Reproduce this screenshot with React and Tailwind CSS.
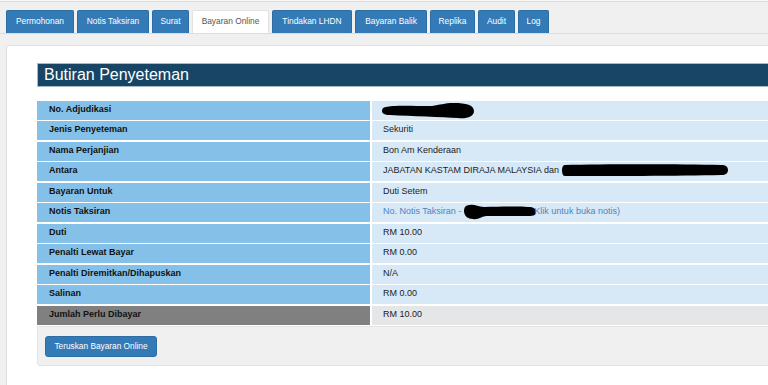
import React from "react";

const tabs = [
  ["Permohonan", "w-[68px]"],
  ["Notis Taksiran", "w-[72px]"],
  ["Surat", "w-[37px]"],
  ["Bayaran Online", "w-[77px]"],
  ["Tindakan LHDN", "w-[80px]"],
  ["Bayaran Balik", "w-[72px]"],
  ["Replika", "w-[45px]"],
  ["Audit", "w-[37px]"],
  ["Log", "w-[31px]"],
];

const rows = [
  { label: "No. Adjudikasi", value: "blob1" },
  { label: "Jenis Penyeteman", value: "Sekuriti" },
  { label: "Nama Perjanjian", value: "Bon Am Kenderaan" },
  { label: "Antara", value: "antara" },
  { label: "Bayaran Untuk", value: "Duti Setem" },
  { label: "Notis Taksiran", value: "notis" },
  { label: "Duti", value: "RM 10.00" },
  { label: "Penalti Lewat Bayar", value: "RM 0.00" },
  { label: "Penalti Diremitkan/Dihapuskan", value: "N/A" },
  { label: "Salinan", value: "RM 0.00" },
  { label: "Jumlah Perlu Dibayar", value: "RM 10.00", total: true },
];

function Value({ v }) {
  if (v === "blob1") {
    return (
      <div className="relative h-full">
        <svg width="94" height="17" viewBox="0 0 94 17" className="absolute left-[-1px] top-[-1px]">
          <path d="M4 4 C10 2 30 3 50 3 C58 2 62 0 72 0 C84 0 92 2 92 8 C92 14 84 16 76 15 C60 14 30 13 8 12 C2 12 0 10 0 8 C0 5 2 4 4 4 Z" fill="#000" />
        </svg>
      </div>
    );
  }
  if (v === "antara") {
    return (
      <div className="flex items-start">
        <span>JABATAN KASTAM DIRAJA MALAYSIA dan </span>
        <svg width="166" height="13" viewBox="0 0 166 13" className="ml-[3px] mt-[-1px]">
          <path d="M3 1 C40 0 120 0 159 1 C164 1 166 3 166 6 C166 9 164 11 159 11 C120 12 40 12 3 12 C1 12 0 10 0 6 C0 3 1 1 3 1 Z" fill="#000" />
        </svg>
      </div>
    );
  }
  if (v === "notis") {
    return (
      <div className="flex items-start text-[#4d84bd]">
        <span>No. Notis Taksiran - </span>
        <svg width="72" height="16" viewBox="0 0 72 16" className="mt-[-2px] ml-[3px]">
          <path d="M6 1 C10 0 14 3 20 3 C36 3 52 2 64 3 C70 3 72 5 72 8 C72 11 70 12 64 12 C50 12 36 12 22 12 C16 13 14 16 9 15 C4 15 0 12 0 7 C0 3 2 1 6 1 Z" fill="#000" />
        </svg>
        <span className="ml-[-2px]">Klik untuk buka notis)</span>
      </div>
    );
  }
  return <span>{v}</span>;
}

export default function App() {
  return (
    <div className="w-full h-[385px] overflow-hidden bg-[#f0f0f0] font-['Liberation_Sans',Arial,sans-serif]">
      <div className="h-[2px] bg-[#f7f7f7] border-b border-[#dcdcdc]" />
      <div className="flex gap-[3px] pl-[6px] pt-[7.5px] border-b border-[#dcdcdc]">
        {tabs.map(([t, w]) => {
          const active = t === "Bayaran Online";
          return (
            <div
              key={t}
              className={
                (active
                  ? "bg-white text-[#555] border border-b-0 border-[#e2e2e2] "
                  : "bg-[#337ab7] text-white border border-b-0 border-[#2e6da4] ") +
                "h-[23px] flex items-center justify-center text-[8.4px] rounded-t-[2px] whitespace-nowrap " +
                w
              }
            >
              {t}
            </div>
          );
        })}
      </div>
      <div className="ml-[6px] mt-[11px] w-[900px] h-[400px] bg-white border border-[#e0e0e0] rounded-[3px] pl-[30px] pt-[17px]">
        <div className="h-[24px] bg-[#184565] border border-[#a9b9c6] flex items-center pl-[6px] text-white text-[16px] leading-none">
          Butiran Penyeteman
        </div>
        <div className="mt-[14px] flex flex-col gap-[1.5px]">
          {rows.map((r) => (
            <div key={r.label} className="flex gap-[2px] h-[19px]">
              <div
                className={
                  (r.total ? "bg-[#808080] " : "bg-[#85c0e8] ") +
                  "w-[333px] pl-[12px] pt-[3px] text-[9px] font-bold text-[#111] leading-[11px]"
                }
              >
                {r.label}
              </div>
              <div
                className={
                  (r.total ? "bg-[#e4e6e7] " : "bg-[#d7e9f7] ") +
                  "flex-1 pl-[11px] pt-[3px] text-[9px] text-[#222] leading-[11px]"
                }
              >
                <Value v={r.value} />
              </div>
            </div>
          ))}
        </div>
        <div className="mt-[1px] h-[40px] bg-[#f0f0f0] border border-[#e2e2e2] rounded-bl-[3px] pl-[7px] pt-[9px] flex items-start">
          <button className="h-[21px] w-[112px] flex items-center justify-center rounded-[3px] bg-[#337ab7] border border-[#2e6da4] text-white text-[8.3px] leading-none whitespace-nowrap">
            Teruskan Bayaran Online
          </button>
        </div>
      </div>
    </div>
  );
}
